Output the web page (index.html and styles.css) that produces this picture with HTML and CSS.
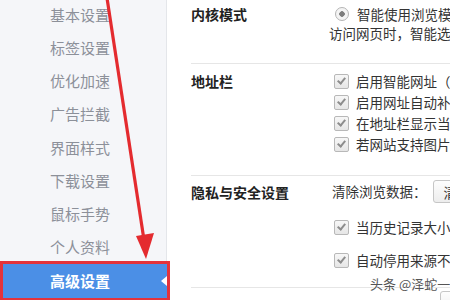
FILE: index.html
```html
<!DOCTYPE html>
<html>
  <head>
    <title>高级设置</title>
    <link rel="stylesheet" href="styles.css">
  </head>
  <body>
    <div class="page">
      <ul class="sidebar">
        <li>基本设置</li>
        <li>标签设置</li>
        <li>优化加速</li>
        <li>广告拦截</li>
        <li>界面样式</li>
        <li>下载设置</li>
        <li>鼠标手势</li>
        <li>个人资料</li>
        <li class="active">高级设置</li>
      </ul>

      <div class="content">
        <div class="section first">
          <div class="label">内核模式</div>
          <div class="options">
            <div class="row"><span class="radio"></span>智能使用浏览模式（推荐）</div>
            <div class="row desc">访问网页时，智能选择最合适的浏览模式</div>
          </div>
        </div>

        <div class="section address">
          <div class="label">地址栏</div>
          <div class="options">
            <div class="row"><span class="check"></span>启用智能网址（<span class="hint">推荐</span>）</div>
            <div class="row"><span class="check"></span>启用网址自动补全功能</div>
            <div class="row"><span class="check"></span>在地址栏显示当前网页的二维码</div>
            <div class="row"><span class="check"></span>若网站支持图片加载则显示</div>
          </div>
        </div>

        <div class="section privacy">
          <div class="label">隐私与安全设置</div>
          <div class="options">
            <div class="row btn-row">清除浏览数据：<button class="btn">清除数据</button></div>
            <div class="row"><span class="check"></span>当历史记录大小超过限制时自动清理</div>
            <div class="row"><span class="check"></span>自动停用来源不明的扩展</div>
          </div>
        </div>

        <div class="section">
          <div class="label">网页内容</div>
          <div class="options">
            <div class="row btn-row">字号<button class="btn">中</button></div>
          </div>
        </div>
      </div>
    </div>

    <!-- annotation drawn over the screenshot -->
    <svg class="arrow" width="450" height="300" viewBox="0 0 450 300">
      <line x1="107" y1="-2" x2="144" y2="240" stroke="#e42b2f" stroke-width="3.2"/>
      <polygon points="136,236 154,233 146,259" fill="#e42b2f"/>
    </svg>
    <div class="watermark">头条 @泽蛇一</div>
  </body>
</html>
```

FILE: styles.css
```css
body {
  margin: 0;
  width: 450px;
  height: 300px;
  overflow: hidden;
  font-family: "Noto Sans CJK SC", "Noto Sans", sans-serif;
  background: #fff;
  position: relative;
}

.page {
  display: flex;
  height: 300px;
}

.sidebar {
  list-style: none;
  margin: 0;
  padding: 0;
  padding-top: 0;
  width: 167px;
  flex-shrink: 0;
  background: #f5f6f9;
  border-right: 1px solid #e4e6ea;
  box-sizing: border-box;
  height: 300px;
  position: relative;
  z-index: 1;
}

.sidebar li {
  height: 33.25px;
  line-height: 33.25px;
  padding-left: 50px;
  font-size: 15px;
  color: #8c9099;
}

.sidebar li:first-child {
  margin-top: -2.5px;
}

.sidebar li.active {
  position: relative;
  height: 34px;
  line-height: 34px;
  margin-left: 3px;
  margin-right: -1px;
  padding-left: 47px;
  background: #4b8fe6;
  color: #fff;
  font-weight: bold;
  box-shadow: 0 0 0 3px #e3333b;
}

.sidebar li.active::after {
  content: "";
  position: absolute;
  right: 0;
  top: 12px;
  border-top: 5px solid transparent;
  border-bottom: 5px solid transparent;
  border-right: 6px solid #fff;
}

.content {
  flex: 1;
  padding-left: 24px;
  overflow: hidden;
  white-space: nowrap;
  font-size: 13.5px;
  color: #333;
}

.section {
  display: grid;
  grid-template-columns: 141px 1fr;
  border-top: 1px solid #e6e6e6;
}

.section.first {
  border-top: none;
  padding: 4.5px 0 20px;
}

.section.first .row {
  line-height: 19px;
  height: 19px;
}

.section.first .label {
  line-height: 19px;
}

.section.address {
  padding: 7px 0 20px;
}

.section.privacy {
  padding: 4px 0 16px;
}

.section:last-child {
  padding-top: 10px;
}

.label {
  font-weight: bold;
  font-size: 14px;
  color: #222;
  line-height: 21px;
}

.section.privacy .label {
  line-height: 24px;
}

.options {
  display: flex;
  flex-direction: column;
}

.row {
  display: flex;
  align-items: center;
  height: 21px;
  line-height: 21px;
}

.section.privacy .options {
  gap: 12px;
}

.section.privacy .row.btn-row {
  margin-bottom: 1px;
}

.row.btn-row {
  height: 24px;
}

.desc {
  margin-left: -3px;
}

.hint {
  color: #f07b1a;
}

.radio {
  width: 12px;
  height: 12px;
  border: 1px solid #b4b4b4;
  border-radius: 50%;
  background: radial-gradient(circle, #7d7d7d 0 2.5px, #f4f4f4 3px);
  margin: 0 8px 0 3px;
  flex-shrink: 0;
}

.check {
  position: relative;
  width: 13px;
  height: 13px;
  border: 1px solid #b8b8b8;
  border-radius: 2px;
  background: linear-gradient(#f7f7f7, #e6e6e6);
  margin: 0 7px 0 2px;
  flex-shrink: 0;
}

.check::after {
  content: "";
  position: absolute;
  left: 4px;
  top: 1.5px;
  width: 3px;
  height: 6px;
  border-right: 2px solid #8d8d8d;
  border-bottom: 2px solid #8d8d8d;
  transform: rotate(40deg);
}

.btn {
  margin-left: auto;
  margin-right: -40px;
  width: 58px;
  height: 23px;
  padding: 0 0 0 10px;
  text-align: left;
  border: 1px solid #c6c6c6;
  border-radius: 3px;
  background: linear-gradient(#fdfdfd, #ededed);
  font-family: inherit;
  font-size: 13.5px;
  color: #333;
}

.section.privacy .btn {
  margin-left: 6px;
}

.section:last-child .btn {
  margin-left: 81px;
  margin-top: -14px;
}

.arrow {
  position: absolute;
  left: 0;
  top: 0;
  z-index: 2;
  pointer-events: none;
}

.watermark {
  position: absolute;
  left: 370px;
  top: 274px;
  z-index: 3;
  font-size: 13px;
  color: #555;
  white-space: nowrap;
  text-shadow: 0 0 2px #fff, 0 0 2px #fff;
}
```
